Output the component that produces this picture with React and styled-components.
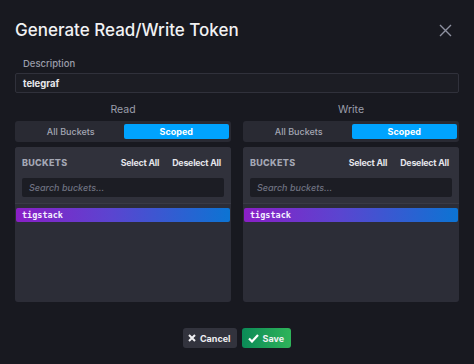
import styled, { createGlobalStyle } from 'styled-components';

const GlobalStyle = createGlobalStyle`
  html, body {
    margin: 0;
    padding: 0;
    background: #181920;
    font-family: Inter, "Noto Sans", sans-serif;
  }
`;

const Dialog = styled.div`
  width: 474px;
  height: 364px;
  box-sizing: border-box;
  padding: 0 15px;
  background: #181920;
  display: flex;
  flex-direction: column;
`;

const Header = styled.div`
  height: 56px;
  display: flex;
  align-items: center;
  justify-content: space-between;
  padding-top: 4px;
  box-sizing: border-box;
`;

const Title = styled.h1`
  margin: 0;
  font-size: 17px;
  font-weight: 500;
  color: #f1f1f3;
`;

const Close = styled.button`
  background: transparent;
  border: none;
  padding: 0;
  margin-right: 7px;
  width: 13px;
  height: 13px;
  display: flex;
  cursor: pointer;
`;

const Label = styled.div`
  font-size: 9.5px;
  font-weight: 500;
  color: #9b9eab;
  padding-left: 8px;
  margin-top: 2px;
  height: 15px;
`;

const TextInput = styled.div`
  height: 20px;
  box-sizing: border-box;
  border: 1px solid #30313b;
  border-radius: 2px;
  background: #1c1d24;
  color: #e8e8ec;
  font-size: 9.5px;
  font-weight: 700;
  display: flex;
  align-items: center;
  padding-left: 7px;
`;

const Columns = styled.div`
  display: grid;
  grid-template-columns: 1fr 1fr;
  gap: 12px;
  margin-top: 8px;
`;

const Column = styled.div`
  display: flex;
  flex-direction: column;
`;

const ColumnTitle = styled.div`
  text-align: center;
  font-size: 10.5px;
  color: #9b9eab;
  height: 20px;
  line-height: 18px;
`;

const Toggle = styled.div`
  height: 21px;
  box-sizing: border-box;
  background: #292a33;
  border-radius: 3px;
  padding: 3px 2px 3px 3px;
  display: grid;
  grid-template-columns: 1fr 1fr;
`;

const ToggleOption = styled.div`
  display: flex;
  align-items: center;
  justify-content: center;
  border-radius: 2px;
  font-size: 9px;
  font-weight: ${(p) => (p.$active ? 700 : 500)};
  color: ${(p) => (p.$active ? '#ffffff' : '#a4a7b4')};
  background: ${(p) => (p.$active ? '#00a3ff' : 'transparent')};
`;

const Panel = styled.div`
  margin-top: 5px;
  height: 155px;
  background: #2c2d37;
  border-radius: 3px;
  display: flex;
  flex-direction: column;
`;

const PanelTop = styled.div`
  background: #30313b;
  border-radius: 3px 3px 0 0;
  padding: 0 7px 6px;
  border-bottom: 1px solid #393a45;
`;

const PanelHeader = styled.div`
  height: 31px;
  display: flex;
  align-items: center;
  gap: 13px;
  padding-right: 3px;
`;

const PanelTitle = styled.span`
  flex: 1;
  font-size: 9px;
  font-weight: 800;
  color: #a4a7b4;
  letter-spacing: 0.3px;
`;

const LinkButton = styled.span`
  font-size: 8.8px;
  font-weight: 700;
  color: #e4e5ea;
  letter-spacing: -0.2px;
`;

const Search = styled.div`
  height: 19px;
  background: #1c1d24;
  border-radius: 2px;
  display: flex;
  align-items: center;
  padding-left: 7px;
  font-size: 9px;
  font-style: italic;
  font-weight: 500;
  color: #6f7281;
`;

const BucketRow = styled.div`
  margin: 4px 1px 0;
  height: 14px;
  border-radius: 2px;
  background: linear-gradient(90deg, #8a1fc6 0%, #5a45d0 45%, #0c74d3 100%);
  display: flex;
  align-items: center;
  padding-left: 6px;
  font-family: "DejaVu Sans Mono", "Liberation Mono", monospace;
  font-size: 8.5px;
  font-weight: 700;
  color: #f4f0ff;
`;

const Footer = styled.div`
  margin-top: 26px;
  display: flex;
  justify-content: center;
  gap: 5px;
`;

const Button = styled.button`
  height: 20px;
  border: none;
  border-radius: 3px;
  display: flex;
  align-items: center;
  gap: 4px;
  padding: 0 ${(p) => (p.$primary ? '7px' : '6px')} 0 ${(p) => (p.$primary ? '6px' : '5px')};
  font-family: Inter, "Noto Sans", sans-serif;
  font-size: 9px;
  font-weight: 700;
  color: #f0f0f3;
  background: ${(p) =>
    p.$primary ? 'linear-gradient(90deg, #0b8a57 0%, #2fb45a 100%)' : '#32333d'};
`;

function CloseIcon() {
  return (
    <svg width="13" height="13" viewBox="0 0 13 13">
      <path d="M1 1L12 12M12 1L1 12" stroke="#8e91a0" strokeWidth="1.4" />
    </svg>
  );
}

function XIcon() {
  return (
    <svg width="8" height="8" viewBox="0 0 8 8">
      <path d="M1 1L7 7M7 1L1 7" stroke="#f0f0f3" strokeWidth="2" />
    </svg>
  );
}

function CheckIcon() {
  return (
    <svg width="11" height="9" viewBox="0 0 11 9">
      <path d="M1 4.5L4 7.5L10 1" stroke="#ffffff" strokeWidth="2.2" fill="none" />
    </svg>
  );
}

function BucketColumn({ title }) {
  return (
    <Column>
      <ColumnTitle>{title}</ColumnTitle>
      <Toggle>
        <ToggleOption>All Buckets</ToggleOption>
        <ToggleOption $active>Scoped</ToggleOption>
      </Toggle>
      <Panel>
        <PanelTop>
          <PanelHeader>
            <PanelTitle>BUCKETS</PanelTitle>
            <LinkButton>Select All</LinkButton>
            <LinkButton>Deselect All</LinkButton>
          </PanelHeader>
          <Search>Search buckets...</Search>
        </PanelTop>
        <BucketRow>tigstack</BucketRow>
      </Panel>
    </Column>
  );
}

export default function App() {
  return (
    <>
      <GlobalStyle />
      <Dialog>
        <Header>
          <Title>Generate Read/Write Token</Title>
          <Close>
            <CloseIcon />
          </Close>
        </Header>
        <Label>Description</Label>
        <TextInput>telegraf</TextInput>
        <Columns>
          <BucketColumn title="Read" />
          <BucketColumn title="Write" />
        </Columns>
        <Footer>
          <Button>
            <XIcon />
            Cancel
          </Button>
          <Button $primary>
            <CheckIcon />
            Save
          </Button>
        </Footer>
      </Dialog>
    </>
  );
}
